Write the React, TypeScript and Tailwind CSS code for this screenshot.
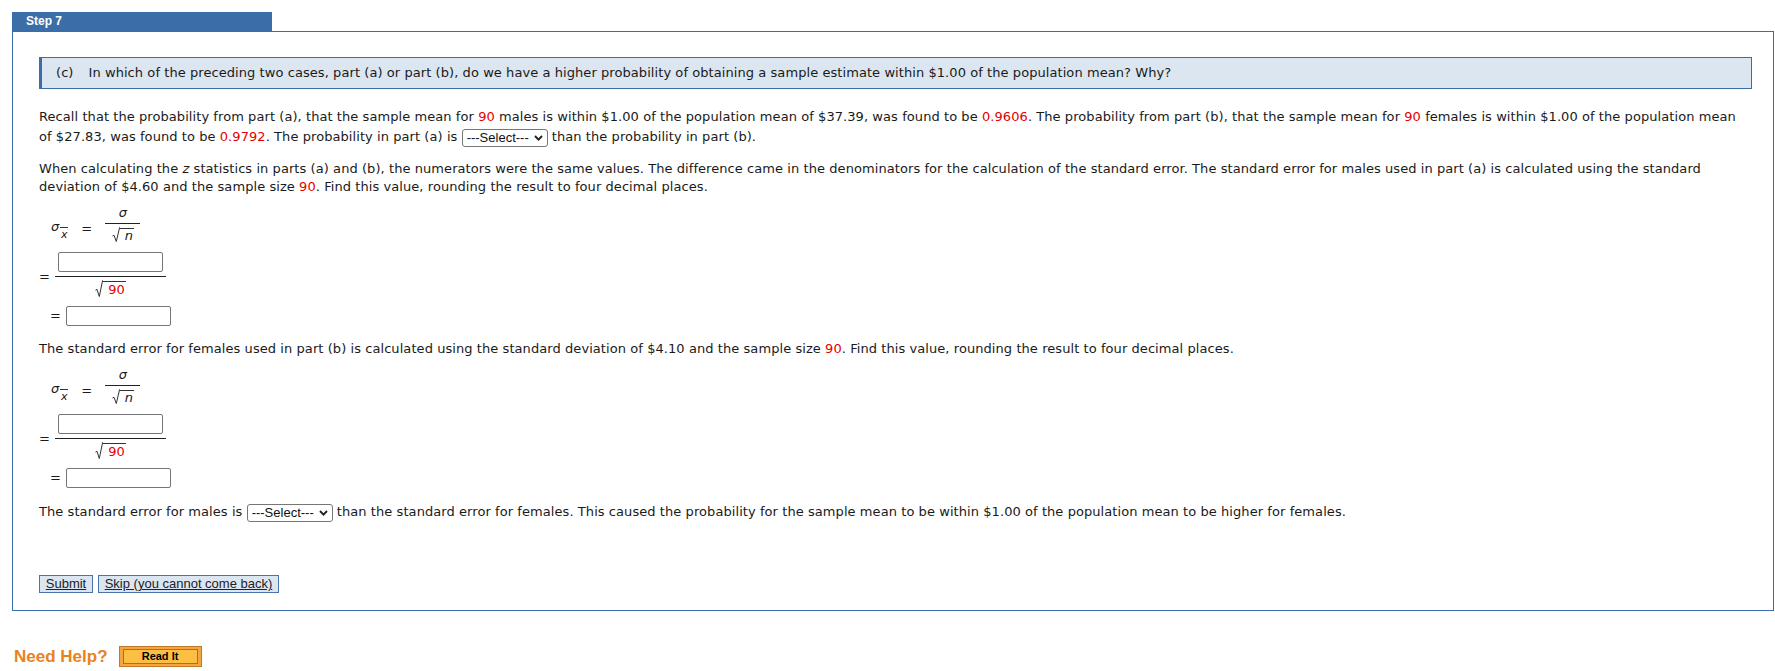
import React from "react";

const Red = ({ children }: { children: React.ReactNode }) => (
  <span className="text-[#e60000]">{children}</span>
);

function Select() {
  return (
    <span className="inline-flex items-center justify-between align-middle h-[18px] w-[86px] border border-[#767676] rounded-[3px] bg-white pl-[4px] pr-[4px] text-[13px] leading-[16px] tracking-normal text-[#111] font-['Liberation_Sans',Arial,sans-serif]">
      <span>---Select---</span>
      <svg width="9" height="6" viewBox="0 0 9 6">
        <path d="M1 1 L4.5 4.6 L8 1" fill="none" stroke="#222" strokeWidth="1.9" />
      </svg>
    </span>
  );
}

function Radical({ h }: { h: number }) {
  return (
    <svg width="8" height={h} viewBox={`0 0 8 ${h}`} className="block shrink-0">
      <path
        d={`M0.5 ${h * 0.6} L2 ${h * 0.55} L4.3 ${h - 0.5} L7.6 0.5 L8 0.5`}
        fill="none"
        stroke="#333"
        strokeWidth="1"
      />
    </svg>
  );
}

function Input() {
  return <div className="w-[105px] h-[20px] border border-[#767676] rounded-[2px] bg-white" />;
}

function Formula() {
  return (
    <div>
      <div className="flex items-start mt-[10px] pl-[12px]">
        <div className="flex items-start mt-[14px]">
          <span className="italic leading-[14px]">σ</span>
          <div className="flex flex-col items-center ml-[1px] mt-[7px]">
            <div className="h-[1px] w-[8px] bg-[#333]" />
            <span className="italic text-[11px] leading-[10px] mt-[2px]">x</span>
          </div>
        </div>
        <span className="leading-[14px] mt-[16px] ml-[13px]">=</span>
        <div className="flex flex-col items-center w-[35px] ml-[13px]">
          <div className="h-[17px]">
            <span className="italic leading-[14px] block">σ</span>
          </div>
          <div className="h-[1px] w-full bg-[#222]" />
          <div className="pt-[3px] flex items-start">
            <Radical h={15} />
            <span className="italic leading-[13px] border-t border-[#333] pl-[5px] pr-[1px] mt-[1px]">n</span>
          </div>
        </div>
      </div>
      <div className="flex items-start mt-[10px]">
        <span className="leading-[14px] mt-[18px]">=</span>
        <div className="flex flex-col items-center w-[111px] ml-[5px]">
          <Input />
          <div className="h-[1px] w-full bg-[#222] mt-[4px]" />
          <div className="pt-[3px] flex items-start">
            <Radical h={17} />
            <span className="leading-[15px] border-t border-[#333] pl-[5px] pr-[1px] mt-[1px]">
              <Red>90</Red>
            </span>
          </div>
        </div>
      </div>
      <div className="flex items-start mt-[9px] pl-[11px]">
        <span className="leading-[20px]">=</span>
        <div className="ml-[5px]">
          <Input />
        </div>
      </div>
    </div>
  );
}

export default function App() {
  return (
    <div className="w-[1775px] h-[671px] bg-white overflow-hidden text-[#1a1a1a] font-['DejaVu_Sans',Verdana,sans-serif] text-[13px] tracking-[0.07px]">
      <div className="pt-[12px] pl-[12px]">
        <div className="w-[260px] h-[19px] bg-[#3b6ea8] text-white font-bold text-[12px] leading-[19px] pl-[14px] tracking-normal font-['Liberation_Sans',Arial,sans-serif]">
          Step 7
        </div>
        <div className="w-[1762px] border border-[#3b6ea8] pt-[25px] pl-[26px] pr-[21px] pb-[17px]">
          <div className="h-[32px] border border-[#3b6ea8] border-l-[3px] bg-[#dce6f0] flex items-center pl-[14px] whitespace-nowrap">
            <span>(c)</span>
            <span className="ml-[15px]">
              In which of the preceding two cases, part (a) or part (b), do we have a higher probability of obtaining a sample estimate within $1.00 of the population mean? Why?
            </span>
          </div>

          <div className="mt-[19px] h-[18px] leading-[18px] whitespace-nowrap">
            Recall that the probability from part (a), that the sample mean for <Red>90</Red> males is within $1.00 of the population mean of $37.39, was found to be <Red>0.9606</Red>. The probability from part (b), that the sample mean for <Red>90</Red> females is within $1.00 of the population mean
          </div>
          <div className="mt-[1px] h-[20px] leading-[20px] whitespace-nowrap">
            of $27.83, was found to be <Red>0.9792</Red>. The probability in part (a) is <Select /> than the probability in part (b).
          </div>

          <div className="mt-[13px] h-[18px] leading-[18px] whitespace-nowrap">
            When calculating the <i>z</i> statistics in parts (a) and (b), the numerators were the same values. The difference came in the denominators for the calculation of the standard error. The standard error for males used in part (a) is calculated using the standard
          </div>
          <div className="h-[18px] leading-[18px] whitespace-nowrap">
            deviation of $4.60 and the sample size <Red>90</Red>. Find this value, rounding the result to four decimal places.
          </div>

          <Formula />

          <div className="mt-[14px] h-[18px] leading-[18px] whitespace-nowrap">
            The standard error for females used in part (b) is calculated using the standard deviation of $4.10 and the sample size <Red>90</Red>. Find this value, rounding the result to four decimal places.
          </div>

          <Formula />

          <div className="mt-[14px] h-[20px] leading-[20px] whitespace-nowrap">
            The standard error for males is <Select /> than the standard error for females. This caused the probability for the sample mean to be within $1.00 of the population mean to be higher for females.
          </div>

          <div className="mt-[53px] flex gap-[5px] font-['Liberation_Sans',Arial,sans-serif] text-[13px] tracking-normal text-[#222]">
            <div className="w-[54px] h-[18px] border border-[#4a74a8] bg-[#dce6f0] flex items-center justify-center underline leading-[16px]">
              Submit
            </div>
            <div className="w-[181px] h-[18px] border border-[#4a74a8] bg-[#dce6f0] flex items-center justify-center underline leading-[16px]">
              Skip (you cannot come back)
            </div>
          </div>
        </div>
      </div>

      <div className="mt-[35px] pl-[14px] flex items-center h-[21px] tracking-normal font-['Liberation_Sans',Arial,sans-serif]">
        <span className="text-[17px] font-bold text-[#e8821e] leading-[21px]">Need Help?</span>
        <div className="ml-[11px] w-[83px] h-[21px] border border-[#c37a2b] bg-[#f4a440] px-[3px] py-[2px]">
          <div className="w-full h-full border border-[#a8721f] bg-[#fcbf44] flex items-center justify-center text-[11px] font-bold text-black leading-[13px]">
            Read It
          </div>
        </div>
      </div>
    </div>
  );
}
